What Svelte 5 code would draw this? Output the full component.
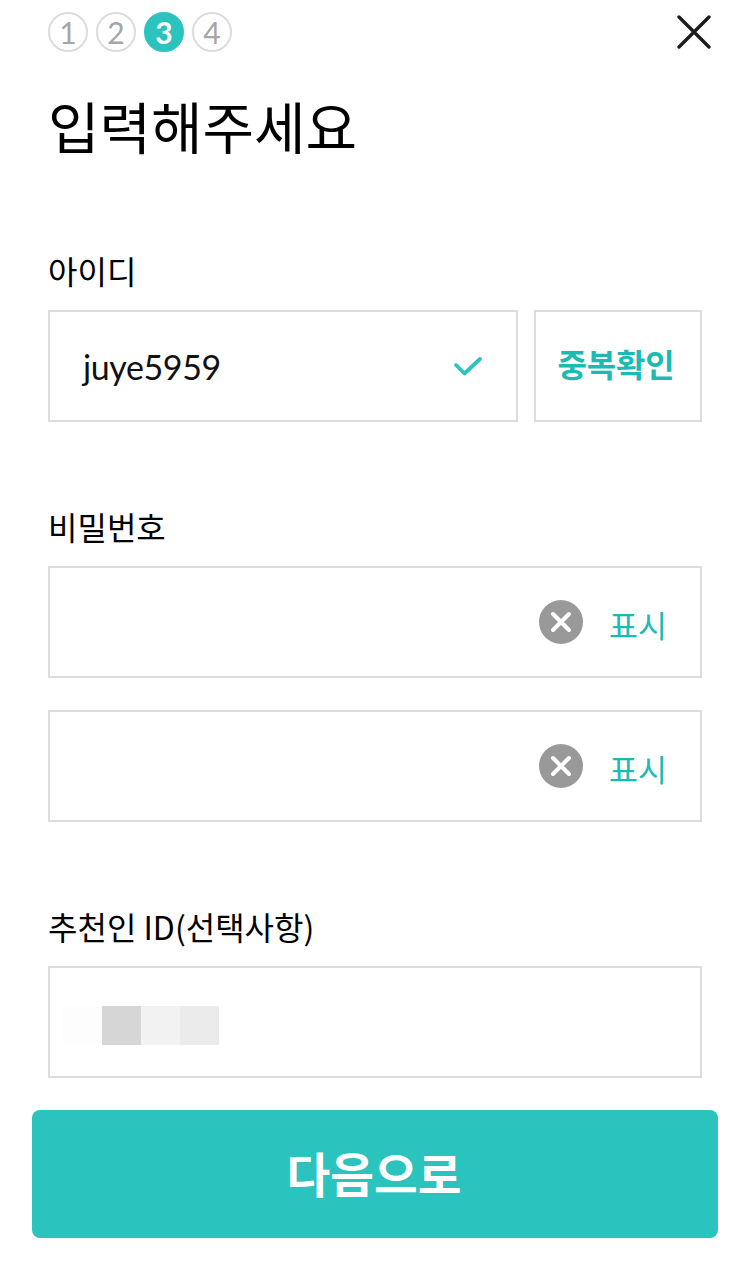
<script>
  const steps = [1, 2, 3, 4];
  const current = 3;
  const pixels = ["#fdfdfd", "#d6d6d6", "#f2f2f2", "#ebebeb"];
</script>

<main class="page">
  <header class="top">
    <ol class="steps">
      {#each steps as s}
        <li class="step" class:active={s === current}>{s}</li>
      {/each}
    </ol>
    <button class="close" aria-label="닫기">
      <svg width="36" height="36" viewBox="0 0 36 36">
        <path d="M2 2L32 32M32 2L2 32" stroke="#1c1c1e" stroke-width="3.4" stroke-linecap="round" fill="none" />
      </svg>
    </button>
  </header>

  <h1>입력해주세요</h1>

  <section class="field">
    <p class="label">아이디</p>
    <div class="row">
      <div class="box grow">
        <span class="value">juye5959</span>
        <svg class="check" width="30" height="22" viewBox="0 0 30 22">
          <path d="M3 10L11.5 18.5L27 4" stroke="#2ac3bd" stroke-width="3.8" stroke-linecap="round" stroke-linejoin="round" fill="none" />
        </svg>
      </div>
      <button class="dup">중복확인</button>
    </div>
  </section>

  <section class="field">
    <p class="label">비밀번호</p>
    {#each [0, 1] as i}
      <div class="box pw">
        <svg class="clear" width="44" height="44" viewBox="0 0 44 44">
          <circle cx="22" cy="22" r="22" fill="#999" />
          <path d="M14 14L30 30M30 14L14 30" stroke="#fff" stroke-width="4" stroke-linecap="round" fill="none" />
        </svg>
        <span class="show">표시</span>
      </div>
    {/each}
  </section>

  <section class="field">
    <p class="label">추천인 ID(선택사항)</p>
    <div class="box">
      <div class="mosaic">
        {#each pixels as c}
          <i style="background: {c}"></i>
        {/each}
      </div>
    </div>
  </section>

  <button class="next">다음으로</button>
</main>

<style>
  :global(body) {
    margin: 0;
    background: #fff;
    font-family: "Noto Sans CJK KR", "Noto Sans", sans-serif;
  }

  .page {
    box-sizing: border-box;
    width: 750px;
    height: 1270px;
    padding: 12px 48px 0;
    color: #000;
    overflow: hidden;
  }

  .top {
    display: flex;
    justify-content: space-between;
    align-items: flex-start;
    height: 40px;
  }

  .steps {
    display: flex;
    gap: 8px;
    margin: 0;
    padding: 0;
    list-style: none;
  }

  .step {
    box-sizing: border-box;
    width: 40px;
    height: 40px;
    border: 2px solid #dcdcdc;
    border-radius: 50%;
    display: flex;
    align-items: center;
    justify-content: center;
    font-family: Lato, sans-serif;
    font-size: 30px;
    color: #a6a6a6;
  }

  .step.active {
    background: #2ac3bd;
    border-color: #2ac3bd;
    color: #fff;
    font-weight: 700;
  }

  .close {
    margin: 3px -11px 0 0;
    padding: 0;
    border: 0;
    background: none;
    line-height: 0;
  }

  h1 {
    margin: 33px 0 0;
    padding-bottom: 1px;
    font-size: 56px;
    font-weight: 400;
    line-height: 80px;
    color: #000;
  }

  .field {
    margin-top: 82px;
  }

  .label {
    margin: 0 0 18px;
    font-size: 32px;
    line-height: 44px;
  }

  .row {
    display: flex;
    gap: 16px;
  }

  .box {
    box-sizing: border-box;
    height: 112px;
    border: 2px solid #dcdcdc;
    display: flex;
    align-items: center;
    background: #fff;
  }

  .grow {
    flex: 1;
    padding: 0 33px;
    justify-content: space-between;
  }

  .value {
    font-family: Lato, sans-serif;
    font-size: 34px;
    letter-spacing: -0.4px;
    color: #111;
  }

  .check {
    display: block;
  }

  .dup {
    box-sizing: border-box;
    width: 168px;
    height: 112px;
    border: 2px solid #dcdcdc;
    background: #fff;
    padding: 0 4px 6px 0;
    font-family: inherit;
    font-size: 32px;
    font-weight: 700;
    letter-spacing: -0.2px;
    color: #1dbab4;
  }

  .pw {
    justify-content: flex-end;
    padding-right: 33px;
    gap: 26px;
  }

  .pw + .pw {
    margin-top: 32px;
  }

  .show {
    font-size: 31.5px;
    margin-top: 4px;
    color: #1dbab4;
  }

  .mosaic {
    display: flex;
    margin: 6px 0 0 13px;
  }

  .mosaic i {
    display: block;
    width: 39px;
    height: 39px;
  }

  .next {
    display: block;
    width: 686px;
    height: 128px;
    margin: 32px -16px 0;
    padding: 0 2px 4px 0;
    border: 0;
    border-radius: 8px;
    background: #2ac3bd;
    color: #fff;
    font-family: inherit;
    font-size: 47.5px;
    font-weight: 700;
  }
</style>
